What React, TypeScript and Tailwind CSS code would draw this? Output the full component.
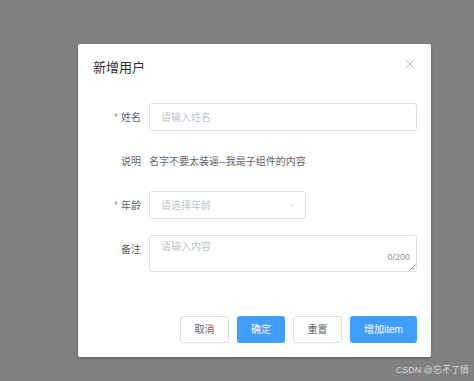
import { X, ChevronDown } from "lucide-react";

const font = { fontFamily: '"Liberation Sans", "Noto Sans CJK SC", sans-serif' };

function Label({ text, required }: { text: string; required?: boolean }) {
  return (
    <div className="flex h-[28px] w-[56px] shrink-0 items-center justify-end pr-[8px] text-[10px] text-[#606266]">
      {required && <span className="mr-[3px] text-[#f56c6c]">*</span>}
      {text}
    </div>
  );
}

export default function App() {
  return (
    <div className="relative h-[381px] w-[474px] overflow-hidden bg-[#808080] pl-[78px] pt-[44px]" style={font}>
      {/* Dialog */}
      <div className="relative h-[313px] w-[353px] rounded-[2px] bg-white pl-[15px] pr-[14px] shadow-[0_1px_3px_rgba(0,0,0,0.3)]">
        <div className="pb-[6px] pt-[15px] text-[13px] leading-[17px] text-[#303133]">新增用户</div>
        <button type="button" aria-label="关闭" className="absolute right-[15px] top-[14px] text-[#909399]">
          <X size={12} strokeWidth={1.3} />
        </button>

        <div className="flex flex-col gap-[16px] pt-[21px]">
          <div className="flex">
            <Label text="姓名" required />
            <div className="flex h-[28px] flex-1 items-center rounded-[3px] border border-[#dcdfe6] px-[11px] text-[10px] text-[#c0c4cc]">
              请输入姓名
            </div>
          </div>

          <div className="flex">
            <Label text="说明" />
            <div className="flex h-[28px] items-center text-[10px] text-[#606266]">名字不要太装逼--我是子组件的内容</div>
          </div>

          <div className="flex">
            <Label text="年龄" required />
            <div className="flex h-[28px] w-[157px] items-center justify-between rounded-[3px] border border-[#dcdfe6] pl-[11px] pr-[8px] text-[10px] text-[#c0c4cc]">
              请选择年龄
              <ChevronDown size={10} strokeWidth={1.5} />
            </div>
          </div>

          <div className="flex">
            <Label text="备注" />
            <div className="relative h-[37px] flex-1 rounded-[3px] border border-[#dcdfe6] px-[11px] pt-[3px] text-[10px] leading-[16px] text-[#c0c4cc]">
              请输入内容
              <span className="absolute bottom-[6px] right-[6px] text-[9px] text-[#909399]">0/200</span>
              <svg className="absolute bottom-[1px] right-[1px]" width="6" height="6" viewBox="0 0 6 6">
                <path d="M1 6L6 1M3.5 6L6 3.5" stroke="#777" strokeWidth="0.8" />
              </svg>
            </div>
          </div>
        </div>

        <div className="flex justify-end gap-[8px] pt-[44px] text-[10px]">
          <button type="button" className="h-[27px] w-[49px] rounded-[3px] border border-[#dcdfe6] bg-white text-[#606266]">取消</button>
          <button type="button" className="h-[27px] w-[48px] rounded-[3px] bg-[#409eff] text-white">确定</button>
          <button type="button" className="h-[27px] w-[49px] rounded-[3px] border border-[#dcdfe6] bg-white text-[#606266]">重置</button>
          <button type="button" className="h-[27px] w-[67px] rounded-[3px] bg-[#409eff] text-white">增加item</button>
        </div>
      </div>

      <div className="absolute bottom-[4px] right-[5px] text-[9px] text-[#d4d4d4]">CSDN @忘不了情</div>
    </div>
  );
}
